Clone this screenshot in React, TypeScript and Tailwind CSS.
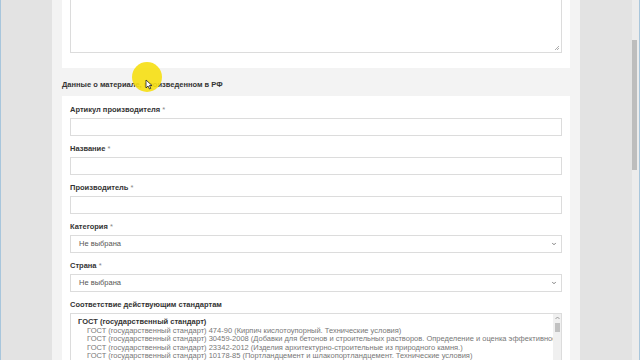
import { ChevronDown } from 'lucide-react';

const fields = [
  { label: 'Артикул производителя', required: true },
  { label: 'Название', required: true },
  { label: 'Производитель', required: true },
];

const selects = [
  { label: 'Категория', value: 'Не выбрана' },
  { label: 'Страна', value: 'Не выбрана' },
];

const standards = [
  'ГОСТ (государственный стандарт) 474-90 (Кирпич кислотоупорный. Технические условия)',
  'ГОСТ (государственный стандарт) 30459-2008 (Добавки для бетонов и строительных растворов. Определение и оценка эффективности)',
  'ГОСТ (государственный стандарт) 23342-2012 (Изделия архитектурно-строительные из природного камня.)',
  'ГОСТ (государственный стандарт) 10178-85 (Портландцемент и шлакопортландцемент. Технические условия)',
];

function Label({ text, required }: { text: string; required?: boolean }) {
  return (
    <div className="h-[10px] leading-[10px] text-[7.5px] font-bold text-[#333] mb-[3px]">
      {text}
      {required && <span className="font-normal text-[#888]"> *</span>}
    </div>
  );
}

export default function App() {
  return (
    <div
      className="relative flex w-[640px] h-[360px] overflow-hidden bg-[#e3e3e3]"
      style={{ fontFamily: '"Liberation Sans", Arial, sans-serif' }}
    >
      {/* Left gutter */}
      <div className="w-[52px] shrink-0 bg-[#e3e3e3] border-l border-[#a8c6dc]" />

      {/* Page */}
      <div className="w-[528px] shrink-0 bg-[#f3f3f3] px-[10px]">
        {/* Description card (scrolled) */}
        <div className="bg-white px-[8px] pb-[15px] -mt-[20px]">
          <div className="relative h-[73px] border border-[#dcdcdc] bg-white">
            <svg className="absolute right-[1px] bottom-[1px]" width="6" height="6" viewBox="0 0 6 6">
              <path d="M5 1L1 5M5 3L3 5" stroke="#999" strokeWidth="0.8" />
            </svg>
          </div>
        </div>

        {/* Section heading */}
        <div className="pt-[12px] pb-[7px] h-[28px] text-[7.5px] leading-[10px] font-bold text-[#333]">
          Данные о материале, произведенном в РФ
        </div>

        {/* Material card */}
        <div className="bg-white px-[8px] pt-[9px] pb-[20px]">
          <div className="flex flex-col gap-[8px]">
            {fields.map((f) => (
              <div key={f.label}>
                <Label text={f.label} required={f.required} />
                <div className="h-[18px] border border-[#dcdcdc] bg-white" />
              </div>
            ))}
            {selects.map((s) => (
              <div key={s.label}>
                <Label text={s.label} required />
                <div className="h-[18px] border border-[#dcdcdc] bg-white flex items-center justify-between pl-[8px] pr-[4px]">
                  <span className="text-[7.5px] text-[#555]">{s.value}</span>
                  <ChevronDown className="w-[6px] h-[6px] text-[#555]" strokeWidth={3} />
                </div>
              </div>
            ))}
            <div>
              <Label text="Соответствие действующим стандартам" />
              <div className="flex h-[70px] border border-[#dcdcdc] bg-white overflow-hidden">
                <div className="flex-1 min-w-0 pt-[4px] pl-[7px] text-[7.5px] leading-[8.5px] overflow-hidden">
                  <div className="font-bold text-[#333] whitespace-nowrap">ГОСТ (государственный стандарт)</div>
                  {standards.map((s) => (
                    <div key={s} className="pl-[9px] text-[#777] whitespace-nowrap overflow-hidden">
                      {s}
                    </div>
                  ))}
                </div>
                <div className="w-[8px] shrink-0 bg-[#f0f0f0] flex flex-col items-center pt-[2px]">
                  <svg width="5" height="4" viewBox="0 0 5 4">
                    <path d="M0.5 3L2.5 1L4.5 3" fill="none" stroke="#888" strokeWidth="0.8" />
                  </svg>
                  <div className="mt-[3px] w-[5px] h-[9px] bg-[#c1c1c1]" />
                </div>
              </div>
            </div>
          </div>
        </div>
      </div>

      {/* Right gutter */}
      <div className="w-[52px] shrink-0 bg-[#e3e3e3]" />

      {/* Browser scrollbar */}
      <div className="w-[8px] shrink-0 bg-[#ececec] border-r border-[#a8c6dc] pt-[40px]">
        <div className="w-[5px] h-[130px] bg-[#bdbdbd]" />
      </div>

      {/* Cursor highlight */}
      <div className="absolute left-[132px] top-[62px] w-[30px] h-[30px] rounded-full bg-[#f6df12]/90" />
      <svg className="absolute left-[145px] top-[79px]" width="8" height="11" viewBox="0 0 8 11">
        <path d="M1 1L1 9L3 7L4.5 10L5.8 9.4L4.4 6.5L7 6.5Z" fill="#fff" stroke="#222" strokeWidth="0.8" />
      </svg>
    </div>
  );
}
